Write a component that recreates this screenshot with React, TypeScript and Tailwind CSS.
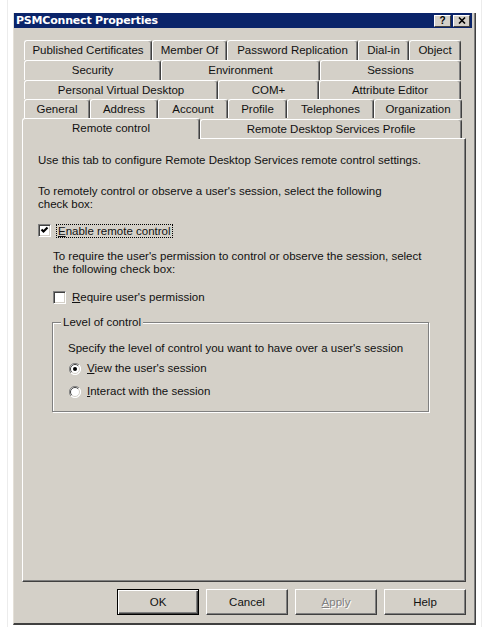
import React from 'react';

const font = 'font-["Liberation_Sans",Arial,sans-serif]';

interface Tab {
  label: string;
  w: string;
}

const rows: Tab[][] = [
  [
    { label: 'Published Certificates', w: 'w-[128px]' },
    { label: 'Member Of', w: 'w-[75px]' },
    { label: 'Password Replication', w: 'w-[131px]' },
    { label: 'Dial-in', w: 'w-[51px]' },
    { label: 'Object', w: 'w-[52px]' },
  ],
  [
    { label: 'Security', w: 'w-[137px]' },
    { label: 'Environment', w: 'w-[159px]' },
    { label: 'Sessions', w: 'w-[141px]' },
  ],
  [
    { label: 'Personal Virtual Desktop', w: 'w-[194px]' },
    { label: 'COM+', w: 'w-[101px]' },
    { label: 'Attribute Editor', w: 'w-[142px]' },
  ],
  [
    { label: 'General', w: 'w-[66px]' },
    { label: 'Address', w: 'w-[68px]' },
    { label: 'Account', w: 'w-[70px]' },
    { label: 'Profile', w: 'w-[59px]' },
    { label: 'Telephones', w: 'w-[87px]' },
    { label: 'Organization', w: 'w-[88px]' },
  ],
];

function TabButton({ label, w }: Tab) {
  return (
    <div
      className={`${w} h-full flex items-center justify-center rounded-t-[3px] border-t border-l border-white border-r border-r-[#404040] shadow-[inset_-1px_0_0_#808080] bg-[#d4d0c8]`}
    >
      {label}
    </div>
  );
}

function Checkbox({ checked }: { checked?: boolean }) {
  return (
    <span className="w-[13px] h-[13px] shrink-0 bg-white border border-t-[#808080] border-l-[#808080] border-b-white border-r-white shadow-[inset_1px_1px_0_#404040,inset_-1px_-1px_0_#d4d0c8] flex items-center justify-center">
      {checked && (
        <svg width="9" height="9" viewBox="0 0 9 9">
          <path d="M1.5 3.5 L3.5 5.5 L7.5 1.5" stroke="#000" strokeWidth="2.2" fill="none" />
        </svg>
      )}
    </span>
  );
}

function Radio({ checked }: { checked?: boolean }) {
  return (
    <svg width="12" height="12" viewBox="0 0 12 12" className="shrink-0">
      <circle cx="6" cy="6" r="5.5" fill="#fff" />
      <path d="M10 2 A5.6 5.6 0 0 0 2 10" stroke="#808080" fill="none" />
      <path d="M9.2 2.8 A4.5 4.5 0 0 0 2.8 9.2" stroke="#404040" fill="none" />
      <path d="M2 10 A5.6 5.6 0 0 0 10 2" stroke="#fff" fill="none" />
      <path d="M2.8 9.2 A4.5 4.5 0 0 0 9.2 2.8" stroke="#d4d0c8" fill="none" />
      {checked && <circle cx="6" cy="6" r="2" fill="#000" />}
    </svg>
  );
}

function Button({ children, isDefault, disabled }: { children: React.ReactNode; isDefault?: boolean; disabled?: boolean }) {
  return (
    <button
      className={`w-[82px] h-[26px] bg-[#d4d0c8] flex items-center justify-center ${
        isDefault
          ? 'border border-black shadow-[inset_1px_1px_0_#fff,inset_-1px_-1px_0_#404040,inset_-2px_-2px_0_#808080]'
          : 'border border-t-white border-l-white border-r-[#404040] border-b-[#404040] shadow-[inset_-1px_-1px_0_#808080]'
      } ${disabled ? 'text-[#808080] [text-shadow:1px_1px_0_#fff]' : 'text-[#111]'}`}
    >
      {children}
    </button>
  );
}

export default function App() {
  return (
    <div className={`w-[496px] h-[627px] bg-white ${font} text-[11.5px] leading-[13px] text-[#111] overflow-hidden`}>
      <div className="ml-[7px] w-[475px] h-full border-x border-[#ececec] pt-[13px]">
        <div className="ml-[5px] w-[463px] h-[612px] bg-[#d4d0c8] border-l border-[#e4e0d8] border-r border-r-[#404040] border-b-2 border-b-[#404040] shadow-[inset_-1px_0_0_#808080] flex flex-col">
          {/* title bar */}
          <div className="h-[15px] mr-[3px] bg-[#0a246a] flex items-center justify-between pl-[2px] pr-[2px]">
            <span className='font-["DejaVu_Sans",Verdana,sans-serif] font-bold text-[11px] text-white tracking-[-0.2px]'>
              PSMConnect Properties
            </span>
            <div className="flex gap-[2px]">
              <span className="w-[17px] h-[12px] bg-[#d4d0c8] border border-t-white border-l-white border-r-[#404040] border-b-[#404040] flex items-center justify-center text-[10px] font-bold leading-none text-black">
                ?
              </span>
              <span className="w-[17px] h-[12px] bg-[#d4d0c8] border border-t-white border-l-white border-r-[#404040] border-b-[#404040] flex items-center justify-center">
                <svg width="8" height="7" viewBox="0 0 8 7">
                  <path d="M1 0.5 L7 6.5 M7 0.5 L1 6.5" stroke="#000" strokeWidth="1.6" />
                </svg>
              </span>
            </div>
          </div>

          {/* tabs */}
          <div className="ml-[8px] mt-[12px] flex flex-col">
            {rows.map((row, i) => (
              <div key={i} className={`flex ml-[2px] ${i < 2 ? 'h-[20px]' : 'h-[19px]'}`}>
                {row.map((t) => (
                  <TabButton key={t.label} {...t} />
                ))}
              </div>
            ))}
            <div className="flex items-end h-[21px] -mb-px relative z-10">
              <div className="w-[178px] h-[21px] flex items-center justify-center rounded-t-[3px] border-t border-l border-white border-r border-r-[#404040] shadow-[inset_-1px_0_0_#808080] bg-[#d4d0c8] pb-[2px]">
                Remote control
              </div>
              <div className="w-[262px] h-[19px] mb-px flex items-center justify-center rounded-t-[3px] border-t border-l border-white border-r border-r-[#404040] shadow-[inset_-1px_0_0_#808080] bg-[#d4d0c8]">
                Remote Desktop Services Profile
              </div>
            </div>

            {/* panel */}
            <div className="w-[444px] h-[444px] bg-[#d4d0c8] border-l border-t border-white border-r border-b border-r-[#404040] border-b-[#404040] shadow-[inset_-1px_-1px_0_#808080] pl-[15px] pt-[15px]">
              <p>Use this tab to configure Remote Desktop Services remote control settings.</p>
              <p className="mt-[18px]">
                To remotely control or observe a user's session, select the following
                <br />
                check box:
              </p>
              <div className="mt-[11px] h-[17px] flex items-center">
                <Checkbox checked />
                <span className="ml-[5px] px-px border border-dotted border-black leading-[12px]">
                  <span className="underline">E</span>nable remote control
                </span>
              </div>
              <p className="mt-[11px] ml-[15px]">
                To require the user's permission to control or observe the session, select
                <br />
                the following check box:
              </p>
              <div className="mt-[13px] ml-[15px] h-[17px] flex items-center gap-[6px]">
                <Checkbox />
                <span>
                  <span className="underline">R</span>equire user's permission
                </span>
              </div>

              {/* group box */}
              <div className="relative mt-[16px] ml-[14px] w-[377px] h-[90px] border border-[#808080] shadow-[inset_1px_1px_0_#fff,1px_1px_0_#fff] pl-[15px] pt-[19px]">
                <span className="absolute -top-[7px] left-[8px] px-[2px] bg-[#d4d0c8]">Level of control</span>
                <p>Specify the level of control you want to have over a user's session</p>
                <div className="mt-[5px] h-[17px] flex items-center gap-[6px] ml-px">
                  <Radio checked />
                  <span>
                    <span className="underline">V</span>iew the user's session
                  </span>
                </div>
                <div className="mt-[6px] h-[17px] flex items-center gap-[6px] ml-px">
                  <Radio />
                  <span>
                    <span className="underline">I</span>nteract with the session
                  </span>
                </div>
              </div>
            </div>

            {/* buttons */}
            <div className="mt-[7px] w-[444px] flex justify-end gap-[7px]">
              <Button isDefault>OK</Button>
              <Button>Cancel</Button>
              <Button disabled>
                <span>
                  <span className="underline">A</span>pply
                </span>
              </Button>
              <Button>Help</Button>
            </div>
          </div>
        </div>
      </div>
    </div>
  );
}
